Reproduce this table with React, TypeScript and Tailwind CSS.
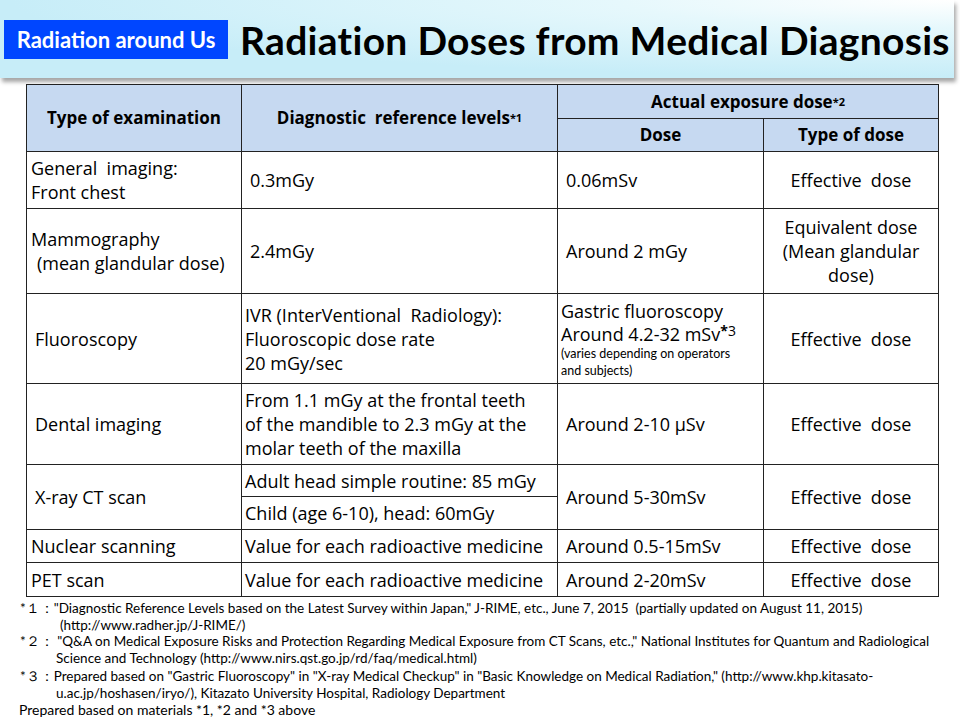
import React from 'react'

const bd = 'border border-[#222]'
const head = `${bd} bg-[#c6d9f1] font-bold text-center align-middle text-[17px]`

const Sup = ({ children }: { children: React.ReactNode }) => (
  <sup className="text-[11px] font-bold relative -top-[2px]">{children}</sup>
)

export default function App() {
  return (
    <div className="w-[960px] h-[720px] bg-white overflow-hidden text-black font-['Open_Sans',sans-serif]">
      {/* Header band */}
      <header className="h-[78px] w-[954px] flex items-center bg-[radial-gradient(ellipse_at_top_right,#ffffff_0%,#e6f8fc_25%,#c7edf8_70%)] shadow-[2px_4px_4px_rgba(0,0,0,0.35)]">
        <div className="ml-[4px] w-[224px] h-[39px] bg-[#0046ff] flex items-center justify-center text-white font-bold text-[22px] font-['Lato',sans-serif]">
          Radiation around Us
        </div>
        <h1 className="ml-[12px] mt-[3px] font-['Lato',sans-serif] font-bold text-[39px] leading-none tracking-[0.3px]">
          Radiation Doses from Medical Diagnosis
        </h1>
      </header>

      {/* Table */}
      <table className="ml-[26px] mt-[6px] border-collapse table-fixed text-[18px] leading-[24px]">
        <colgroup>
          <col className="w-[215px]" />
          <col className="w-[316px]" />
          <col className="w-[206px]" />
          <col className="w-[175px]" />
        </colgroup>
        <thead>
          <tr className="h-[34px]">
            <th rowSpan={2} className={head}>Type of examination</th>
            <th rowSpan={2} className={head}>
              Diagnostic&nbsp; reference levels<Sup>*1</Sup>
            </th>
            <th colSpan={2} className={head}>
              Actual exposure dose<Sup>*2</Sup>
            </th>
          </tr>
          <tr className="h-[33px]">
            <th className={head}>Dose</th>
            <th className={head}>Type of dose</th>
          </tr>
        </thead>
        <tbody>
          <tr className="h-[57px]">
            <td className={`${bd} px-[4px]`}>
              General&nbsp; imaging:
              <br />
              Front chest
            </td>
            <td className={`${bd} pl-[8px]`}>0.3mGy</td>
            <td className={`${bd} pl-[8px]`}>0.06mSv</td>
            <td className={`${bd} text-center`}>Effective&nbsp; dose</td>
          </tr>
          <tr className="h-[85px]">
            <td className={`${bd} px-[4px]`}>
              Mammography
              <br />
              <span className="pl-[6px]">(mean glandular dose)</span>
            </td>
            <td className={`${bd} pl-[8px]`}>2.4mGy</td>
            <td className={`${bd} pl-[8px]`}>Around 2 mGy</td>
            <td className={`${bd} text-center`}>
              Equivalent dose
              <br />
              (Mean glandular
              <br />
              dose)
            </td>
          </tr>
          <tr className="h-[90px]">
            <td className={`${bd} pl-[8px]`}>Fluoroscopy</td>
            <td className={`${bd} pl-[3px]`}>
              IVR (InterVentional&nbsp; Radiology):
              <br />
              Fluoroscopic dose rate
              <br />
              20 mGy/sec
            </td>
            <td className={`${bd} pl-[3px] py-[2px]`}>
              <div>Gastric fluoroscopy</div>
              <div className="leading-[22px]">
                Around 4.2-32 mSv<span className="text-[14px] align-top relative -top-[3px]"><b>*</b>3</span>
              </div>
              <div className="text-[12.5px] leading-[17px] font-['Lato',sans-serif]">
                (varies depending on operators
                <br />
                and subjects)
              </div>
            </td>
            <td className={`${bd} text-center`}>Effective&nbsp; dose</td>
          </tr>
          <tr className="h-[81px]">
            <td className={`${bd} pl-[8px]`}>Dental imaging</td>
            <td className={`${bd} pl-[3px]`}>
              From 1.1 mGy at the frontal teeth
              <br />
              of the mandible to 2.3 mGy at the
              <br />
              molar teeth of the maxilla
            </td>
            <td className={`${bd} pl-[8px]`}>Around 2-10 µSv</td>
            <td className={`${bd} text-center`}>Effective&nbsp; dose</td>
          </tr>
          <tr className="h-[32px]">
            <td rowSpan={2} className={`${bd} pl-[8px]`}>X-ray CT scan</td>
            <td className={`${bd} pl-[3px]`}>Adult head simple routine: 85 mGy</td>
            <td rowSpan={2} className={`${bd} pl-[8px]`}>Around 5-30mSv</td>
            <td rowSpan={2} className={`${bd} text-center`}>Effective&nbsp; dose</td>
          </tr>
          <tr className="h-[33px]">
            <td className={`${bd} pl-[3px]`}>Child (age 6-10), head: 60mGy</td>
          </tr>
          <tr className="h-[33px]">
            <td className={`${bd} px-[4px]`}>Nuclear scanning</td>
            <td className={`${bd} pl-[3px]`}>Value for each radioactive medicine</td>
            <td className={`${bd} pl-[8px]`}>Around 0.5-15mSv</td>
            <td className={`${bd} text-center`}>Effective&nbsp; dose</td>
          </tr>
          <tr className="h-[34px]">
            <td className={`${bd} px-[4px]`}>PET scan</td>
            <td className={`${bd} pl-[3px]`}>Value for each radioactive medicine</td>
            <td className={`${bd} pl-[8px]`}>Around 2-20mSv</td>
            <td className={`${bd} text-center`}>Effective&nbsp; dose</td>
          </tr>
        </tbody>
      </table>

      {/* Footnotes */}
      <div className="mt-[3px] ml-[20px] font-['Lato',sans-serif] text-[13.5px] leading-[16.5px] whitespace-nowrap">
        <div>
          *１：&quot;Diagnostic Reference Levels based on the Latest Survey within Japan,&quot; J-RIME, etc., June 7, 2015&nbsp; (partially updated on August 11, 2015)
        </div>
        <div className="pl-[40px]">(http://www.radher.jp/J-RIME/)</div>
        <div>
          *２：&nbsp;&quot;Q&amp;A on Medical Exposure Risks and Protection Regarding Medical Exposure from CT Scans, etc.,&quot; National Institutes for Quantum and Radiological
        </div>
        <div className="pl-[36px]">Science and Technology (http://www.nirs.qst.go.jp/rd/faq/medical.html)</div>
        <div className="mt-[2px]">
          *３：Prepared based on &quot;Gastric Fluoroscopy&quot; in &quot;X-ray Medical Checkup&quot; in &quot;Basic Knowledge on Medical Radiation,&quot; (http://www.khp.kitasato-
        </div>
        <div className="pl-[36px]">u.ac.jp/hoshasen/iryo/), Kitazato University Hospital, Radiology Department</div>
        <div className="text-[14px] -ml-[1px] mt-[1px]">Prepared based on materials *1, *2 and *3 above</div>
      </div>
    </div>
  )
}
